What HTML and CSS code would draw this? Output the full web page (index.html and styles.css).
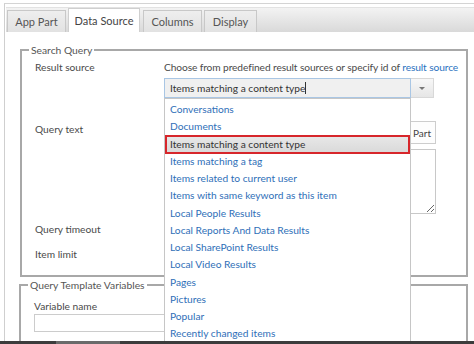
FILE: index.html
```
<!DOCTYPE html>
<html lang="en">
<head>
<meta charset="UTF-8">
<title>Data Source</title>
<link rel="stylesheet" href="styles.css">
</head>
<body>
<div class="page">
  <div class="panel">
    <div class="tabs">
      <div class="tab tab-app">App Part</div>
      <div class="tab tab-active">Data Source</div>
      <div class="tab tab-cols">Columns</div>
      <div class="tab tab-disp">Display</div>
    </div>

    <div class="content">
      <fieldset class="group">
        <legend>Search Query</legend>

        <div class="row row-source">
          <div class="label">Result source</div>
          <div class="field">
            <div class="hint">Choose from predefined result sources or specify id of <a href="#">result source</a></div>
            <div class="select-wrap">
              <div class="select">Items matching a content type<span class="caret"></span></div>
              <div class="select-btn"><span class="arrow"></span></div>

              <ul class="dropdown">
                <li>Conversations</li>
                <li>Documents</li>
                <li class="selected">Items matching a content type</li>
                <li>Items matching a tag</li>
                <li>Items related to current user</li>
                <li>Items with same keyword as this item</li>
                <li>Local People Results</li>
                <li>Local Reports And Data Results</li>
                <li>Local SharePoint Results</li>
                <li>Local Video Results</li>
                <li>Pages</li>
                <li>Pictures</li>
                <li>Popular</li>
                <li>Recently changed items</li>
              </ul>
            </div>
          </div>
        </div>

        <div class="row row-query">
          <div class="label">Query text</div>
          <div class="field">
            <div class="btn-line"><button class="btn">Launch Query Builder Part</button></div>
            <textarea class="query-box"></textarea>
          </div>
        </div>

        <div class="row row-timeout">
          <div class="label">Query timeout</div>
          <div class="field"><input type="text" class="small-input"></div>
        </div>

        <div class="row row-limit">
          <div class="label">Item limit</div>
          <div class="field"><input type="text" class="small-input"></div>
        </div>
      </fieldset>

      <fieldset class="group group-vars">
        <legend>Query Template Variables</legend>
        <div class="var-label">Variable name</div>
        <input type="text" class="var-input">
        <div class="var-actions"><a href="#" class="remove">Remove</a></div>
      </fieldset>
    </div>
  </div>
  <div class="bottom-bar"><span class="thumb"></span></div>
</div>
</body>
</html>
```

FILE: styles.css
```
  body {
    margin: 0;
    font-family: Lato, 'Open Sans', sans-serif;
    font-size: 10.2px;
    color: #4a4a4a;
    background-color: #fff;
  }
  .page {
    width: 474px;
    height: 344px;
    display: flex;
    flex-direction: column;
    overflow: hidden;
  }
  .panel {
    flex: 1;
    margin: 3px 0 0 4px;
    border-top: 1px solid #d4d4d4;
    border-left: 1px solid #cfcfcf;
    padding-top: 3px;
    overflow: hidden;
  }

  /* tabs */
  .tabs {
    height: 25px;
    margin-left: 1px;
    padding-left: 1px;
    display: flex;
    align-items: flex-end;
    gap: 2px;
    background: linear-gradient(#f3f3f3, #d9d9d9);
    border-top: 1px solid #e2e2e2;
    box-sizing: border-box;
  }
  .tab {
    height: 22px;
    line-height: 21px;
    text-align: center;
    background: linear-gradient(#eeeeee, #e2e2e2);
    border: 1px solid #c8c8c8;
    border-bottom: none;
    box-sizing: border-box;
    color: #555;
    font-size: 11px;
  }
  .tab-app { width: 59px; }
  .tab-active {
    width: 72px;
    height: 24px;
    line-height: 23px;
    background: #fff;
    border-color: #cfcfcf;
    margin-right: 1px;
    color: #444;
  }
  .tab-cols { width: 59px; }
  .tab-disp { width: 53px; }

  /* fieldsets */
  .content {
    padding: 12px 6px 0 15px;
  }
  .group {
    margin: 0;
    padding: 0 10px 11px 13px;
    border: 2px solid #a8a8a8;
    min-width: 0;
  }
  .group legend {
    padding: 0 2px;
    margin-left: -6px;
    color: #555;
    font-size: 10.3px;
  }
  .row {
    display: grid;
    grid-template-columns: 129px 1fr;
  }
  .label {
    line-height: 15px;
  }
  .hint {
    line-height: 15px;
    white-space: nowrap;
    letter-spacing: -0.1px;
  }
  a {
    color: #2b72c0;
    text-decoration: none;
  }
  .row-source {
    margin-top: 4px;
  }

  /* select with open list */
  .select-wrap {
    position: relative;
    display: flex;
    width: 270px;
    height: 20px;
    margin-top: 3px;
  }
  .select {
    flex: 1;
    border: 1px solid #a9c6e4;
    background-color: #f0f0f0;
    line-height: 18px;
    padding-left: 5px;
    color: #333;
    white-space: nowrap;
  }
  .caret {
    display: inline-block;
    width: 1px;
    height: 12px;
    background: #333;
    vertical-align: -2px;
  }
  .select-btn {
    width: 22px;
    border: 1px solid #d8d8d8;
    border-left: none;
    background: linear-gradient(#f7f7f7, #e6e6e6);
    display: flex;
    align-items: center;
    justify-content: center;
  }
  .arrow {
    border-left: 3px solid transparent;
    border-right: 3px solid transparent;
    border-top: 3px solid #777;
  }
  .dropdown {
    position: absolute;
    top: 20px;
    left: 0;
    width: 247px;
    margin: 0;
    padding: 2px 0 0;
    list-style: none;
    background-color: #fff;
    border: 1px solid #c6c6c6;
    box-sizing: border-box;
    z-index: 2;
  }
  .dropdown li {
    height: 17.25px;
    line-height: 17px;
    padding-left: 5px;
    color: #2f6fb8;
    white-space: nowrap;
  }
  .dropdown li.selected {
    color: #333;
    background: linear-gradient(#e8e8e8, #d9d9d9);
    outline: 2px solid #d7262b;
    outline-offset: -1px;
    margin: 0 1px;
    padding-left: 4px;
  }

  /* rows behind the list */
  .row-query {
    margin-top: 23px;
  }
  .row-query .label {
    margin-top: 1px;
  }
  .btn-line {
    display: flex;
    justify-content: flex-end;
    width: 272px;
  }
  .btn {
    height: 23px;
    padding: 0 4px;
    border: 1px solid #cdcdcd;
    background-color: #fdfdfd;
    font-family: inherit;
    font-size: 10px;
    color: #444;
  }
  .query-box {
    display: block;
    width: 272px;
    height: 65px;
    margin-top: 5px;
    border: 1px solid #c8c8c8;
    box-sizing: border-box;
    resize: both;
  }
  .row-timeout {
    margin-top: 8px;
  }
  .row-limit {
    margin-top: 8px;
  }
  .small-input {
    width: 60px;
    height: 17px;
    border: 1px solid #ccc;
    box-sizing: border-box;
  }

  .group-vars {
    margin-top: 2px;
    margin-left: -1px;
    padding: 0 10px 20px 13px;
  }
  .var-label {
    margin-top: 8px;
    line-height: 15px;
  }
  .var-input {
    display: block;
    width: 250px;
    height: 18px;
    margin-top: 0;
    border: 1px solid #ccc;
    box-sizing: border-box;
  }
  .var-actions {
    text-align: right;
    padding-right: 12px;
    margin-top: 6px;
  }
  .remove {
    color: #555;
  }

  .bottom-bar {
    height: 3px;
    background-color: #3c3c3c;
    position: relative;
  }
  .thumb {
    display: block;
    margin-left: 56px;
    width: 64px;
    height: 3px;
    background-color: #6a6a6a;
  }
```
